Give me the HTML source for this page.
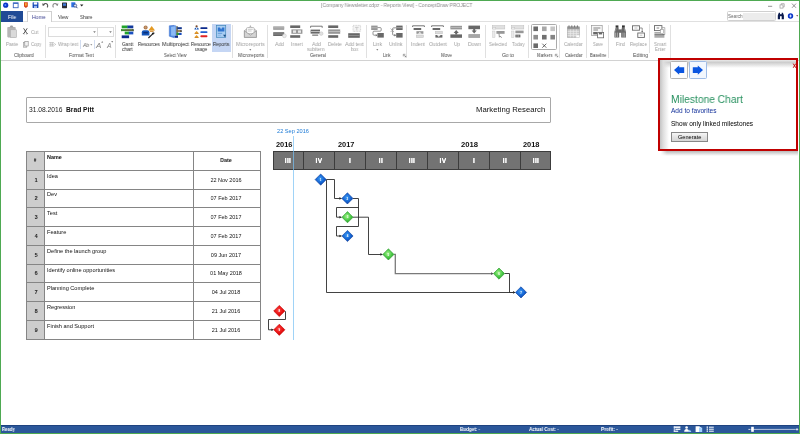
<!DOCTYPE html><html><head><meta charset="utf-8"><title>ConceptDraw PROJECT</title><style>html,body{margin:0;padding:0;}body{width:800px;height:434px;overflow:hidden;background:#fff;position:relative;font-family:"Liberation Sans", sans-serif;}div,span,svg{position:absolute;}span{white-space:nowrap;transform-origin:0 50%;will-change:transform;}svg{overflow:visible;}</style></head><body>
<span id="t0" style="left:321.00px;top:2px;font-size:5.2px;line-height:6px;color:#8a8a8a;transform:scaleX(0.9457);">[Company Newsletter.cdpz - Reports View] - ConceptDraw PROJECT</span>
<svg style="left:0.00px;top:0.00px" width="100" height="11" viewBox="0 0 100 11"><circle cx="5.7" cy="5.2" r="2.6" fill="#0a35c8"/><circle cx="5.4" cy="4.9" r="1" fill="#5b8cff"/><rect x="13.3" y="2.9" width="4.8" height="4.8" fill="#fff" stroke="#3a66c0" stroke-width="0.9"/><rect x="13.3" y="2.7" width="4.8" height="1.2" fill="#3a66c0"/><path d="M24 2.3h3.8v4.2l-1.9 1.5l-1.9 -1.5z" fill="#d8461a"/><rect x="25" y="3.1" width="1.8" height="2.6" fill="#f5a733"/><rect x="32.6" y="2.3" width="5.8" height="5.8" rx="0.5" fill="#1548b8"/><rect x="33.8" y="2.3" width="3.4" height="2.3" fill="#fff"/><rect x="34" y="5.8" width="3" height="2.3" fill="#9db8ee"/><path d="M43.2 5.2a2.3 2.3 0 1 1 3.9 2.2" fill="none" stroke="#555" stroke-width="1.1"/><path d="M42.2 3.3l0.6 2.8l2.4 -1.4z" fill="#555"/><path d="M57.4 5.2a2.3 2.3 0 1 0 -3.9 2.2" fill="none" stroke="#8a8a8a" stroke-width="1.1"/><path d="M58.4 3.3l-0.6 2.8l-2.4 -1.4z" fill="#8a8a8a"/><rect x="62" y="2.4" width="5" height="5.8" rx="0.6" fill="#2c2c34"/><rect x="63" y="3.4" width="3" height="2.4" fill="#3f79d8"/><rect x="71.3" y="2.3" width="4" height="5" fill="#2d6fe0"/><circle cx="75.2" cy="5.6" r="1.5" fill="#dfe9fb" stroke="#223a7a" stroke-width="0.7"/><path d="M76.2 6.8l1.2 1.4" stroke="#223a7a" stroke-width="0.9"/><path d="M80 4.4h3.4l-1.7 2z" fill="#222"/></svg>
<svg style="left:0.00px;top:0.00px" width="800" height="11" viewBox="0 0 800 11"><path d="M768 6.3h4.2" stroke="#777" stroke-width="0.8"/><rect x="780" y="4.9" width="3" height="3.2" fill="none" stroke="#9a9a9a" stroke-width="0.7"/><path d="M781.2 4.9v-1.2h3v3.2h-1.2" fill="none" stroke="#9a9a9a" stroke-width="0.7"/><path d="M792 3.6l4 4.2M796 3.6l-4 4.2" stroke="#777" stroke-width="0.8"/></svg>
<div style="left:1.00px;top:21.20px;width:798.00px;height:0.80px;background:#e0e0e0;"></div>
<div style="left:1.00px;top:11.20px;width:22.00px;height:10.80px;background:#1f4a96;"></div>
<span id="t1" style="left:8.00px;top:13px;font-size:6.2px;line-height:7px;color:#fff;transform:scaleX(0.8213);">File</span>
<div style="left:26.50px;top:11.20px;width:25.50px;height:11.00px;background:#fff;box-sizing:border-box;border:0.8px solid #cfcfcf;border-bottom:none;"></div>
<span id="t2" style="left:32.20px;top:14px;font-size:5.8px;line-height:6px;color:#3a3f8f;transform:scaleX(0.8792);">Home</span>
<span id="t3" style="left:58.00px;top:14px;font-size:5.8px;line-height:6px;color:#3a3a3a;transform:scaleX(0.8180);">View</span>
<span id="t4" style="left:80.00px;top:14px;font-size:5.8px;line-height:6px;color:#3a3a3a;transform:scaleX(0.7952);">Share</span>
<div style="left:726.60px;top:11.20px;width:49.40px;height:9.60px;background:#fff;box-sizing:border-box;border:0.8px solid #d0d0d0;border-radius:1.5px;"></div>
<div style="left:743.20px;top:12.60px;width:31.80px;height:7.00px;background:#ececec;"></div>
<span id="t5" style="left:728.00px;top:13px;font-size:5.4px;line-height:6px;color:#666;transform:scaleX(0.8541);">Search</span>
<svg style="left:0.00px;top:0.00px" width="800" height="22" viewBox="0 0 800 22"><path d="M777.8 19.2v-3.6l1 -2.8h1.2v6.4z M783.9 19.2v-3.6l-1 -2.8h-1.2v6.4z" fill="#0b1b4d"/><rect x="779.6" y="14.2" width="2.6" height="2" fill="#0b1b4d"/><circle cx="790.5" cy="16" r="2.7" fill="#0a35c8"/><path d="M790.5 14.2l1.2 1.8l-1.2 1.8l-1.2 -1.8z" fill="#cfe0ff"/><path d="M796.2 15.3h2l-1 1.3z" fill="#5a2a2a"/></svg>
<div style="left:1.00px;top:60.30px;width:798.00px;height:0.80px;background:#d2d2d2;"></div>
<div style="left:45.00px;top:24.70px;width:0.80px;height:33.00px;background:#e0e0e0;"></div>
<div style="left:115.30px;top:24.70px;width:0.80px;height:33.00px;background:#e0e0e0;"></div>
<div style="left:232.30px;top:24.70px;width:0.80px;height:33.00px;background:#e0e0e0;"></div>
<div style="left:267.30px;top:24.70px;width:0.80px;height:33.00px;background:#e0e0e0;"></div>
<div style="left:365.80px;top:24.70px;width:0.80px;height:33.00px;background:#e0e0e0;"></div>
<div style="left:405.80px;top:24.70px;width:0.80px;height:33.00px;background:#e0e0e0;"></div>
<div style="left:485.10px;top:24.70px;width:0.80px;height:33.00px;background:#e0e0e0;"></div>
<div style="left:527.90px;top:24.70px;width:0.80px;height:33.00px;background:#e0e0e0;"></div>
<div style="left:559.10px;top:24.70px;width:0.80px;height:33.00px;background:#e0e0e0;"></div>
<div style="left:586.00px;top:24.70px;width:0.80px;height:33.00px;background:#e0e0e0;"></div>
<div style="left:608.40px;top:24.70px;width:0.80px;height:33.00px;background:#e0e0e0;"></div>
<div style="left:669.80px;top:24.70px;width:0.80px;height:33.00px;background:#e0e0e0;"></div>
<div style="left:649.10px;top:24.00px;width:0.80px;height:28.50px;background:#e0e0e0;"></div>
<div style="left:79.60px;top:40.00px;width:0.80px;height:9.40px;background:#d2ddf0;"></div>
<div style="left:94.10px;top:40.00px;width:0.80px;height:9.40px;background:#d2ddf0;"></div>
<span id="t6" style="left:14.00px;top:52px;font-size:5.3px;line-height:6px;color:#484848;transform:scaleX(0.8683);">Clipboard</span>
<span id="t7" style="left:69.00px;top:52px;font-size:5.3px;line-height:6px;color:#484848;transform:scaleX(0.8861);">Format Text</span>
<span id="t8" style="left:164.00px;top:52px;font-size:5.3px;line-height:6px;color:#484848;transform:scaleX(0.8154);">Select View</span>
<span id="t9" style="left:237.70px;top:52px;font-size:5.3px;line-height:6px;color:#484848;transform:scaleX(0.8866);">Microreports</span>
<span id="t10" style="left:309.70px;top:52px;font-size:5.3px;line-height:6px;color:#484848;transform:scaleX(0.8484);">General</span>
<span id="t11" style="left:383.00px;top:52px;font-size:5.3px;line-height:6px;color:#484848;transform:scaleX(0.7717);">Link</span>
<span id="t12" style="left:441.00px;top:52px;font-size:5.3px;line-height:6px;color:#484848;transform:scaleX(0.8492);">Move</span>
<span id="t13" style="left:501.70px;top:52px;font-size:5.3px;line-height:6px;color:#484848;transform:scaleX(0.9253);">Go to</span>
<span id="t14" style="left:536.50px;top:52px;font-size:5.3px;line-height:6px;color:#484848;transform:scaleX(0.8098);">Markers</span>
<span id="t15" style="left:564.70px;top:52px;font-size:5.3px;line-height:6px;color:#484848;transform:scaleX(0.8140);">Calendar</span>
<span id="t16" style="left:589.70px;top:52px;font-size:5.3px;line-height:6px;color:#484848;transform:scaleX(0.8117);">Baseline</span>
<span id="t17" style="left:633.00px;top:52px;font-size:5.3px;line-height:6px;color:#484848;transform:scaleX(0.9257);">Editing</span>
<svg style="left:403.20px;top:54.20px" width="3" height="3" viewBox="0 0 3 3"><path d="M0.3 2.4v-2.1h2.1" fill="none" stroke="#666" stroke-width="0.6"/><path d="M1.2 1.2l1.6 1.6m0 -1.2v1.2h-1.2" fill="none" stroke="#666" stroke-width="0.6"/></svg>
<svg style="left:555.00px;top:54.20px" width="3" height="3" viewBox="0 0 3 3"><path d="M0.3 2.4v-2.1h2.1" fill="none" stroke="#666" stroke-width="0.6"/><path d="M1.2 1.2l1.6 1.6m0 -1.2v1.2h-1.2" fill="none" stroke="#666" stroke-width="0.6"/></svg>
<span id="t18" style="left:6.00px;top:41px;font-size:5.6px;line-height:6px;color:#9e9e9e;transform:scaleX(0.8384);">Paste</span>
<span id="t19" style="left:30.70px;top:29px;font-size:5.6px;line-height:6px;color:#9e9e9e;transform:scaleX(0.8373);">Cut</span>
<span id="t20" style="left:30.70px;top:41px;font-size:5.6px;line-height:6px;color:#9e9e9e;transform:scaleX(0.7885);">Copy</span>
<svg style="left:6.70px;top:24.70px" width="10" height="13" viewBox="0 0 10 13"><rect x="0.3" y="2" width="8.4" height="10.4" rx="0.8" fill="#b6b6b6"/><path d="M2.4 2.6l1.2 -2.2h1.8l1.2 2.2z" fill="#a0a0a0"/><rect x="3.4" y="4.8" width="6.2" height="7.9" fill="#dadada" stroke="#a8a8a8" stroke-width="0.5"/></svg>
<svg style="left:23.00px;top:28.00px" width="6" height="7" viewBox="0 0 6 7"><path d="M0.6 0.3l3.6 5.6M4.2 0.3l-3.6 5.6" stroke="#454545" stroke-width="0.9" fill="none"/><path d="M0.3 5.4l0.7 0.9M4.5 5.4l-0.7 0.9" stroke="#454545" stroke-width="0.8"/></svg>
<svg style="left:23.00px;top:40.60px" width="6" height="7" viewBox="0 0 6 7"><rect x="0.4" y="1.6" width="3.4" height="4.6" fill="#e6e6e6" stroke="#9a9a9a" stroke-width="0.6"/><rect x="1.8" y="0.4" width="3.4" height="4.6" fill="#f2f2f2" stroke="#8a8a8a" stroke-width="0.6"/></svg>
<div style="left:48.20px;top:27.20px;width:49.80px;height:9.60px;background:#fff;box-sizing:border-box;border:1px solid #dcdcdc;"></div>
<div style="left:97.00px;top:27.20px;width:17.00px;height:9.60px;background:#fff;box-sizing:border-box;border:1px solid #dcdcdc;"></div>
<svg style="left:93.00px;top:31.00px" width="3" height="2" viewBox="0 0 3 2"><path d="M0.2 0.2h2.6l-1.3 1.7z" fill="#7c7c7c"/></svg>
<svg style="left:109.40px;top:31.00px" width="3" height="2" viewBox="0 0 3 2"><path d="M0.2 0.2h2.6l-1.3 1.7z" fill="#7c7c7c"/></svg>
<svg style="left:49.40px;top:41.80px" width="7" height="5" viewBox="0 0 7 5"><path d="M0.2 0.6h4.8M0.2 2.3h4.8M0.2 4h4.8M1.8 0.4v3.8M3.6 0.4v3.8" stroke="#b0b0b0" stroke-width="0.6"/><path d="M5.4 1.4l1.2 1l-1.2 1" stroke="#9a9a9a" stroke-width="0.6" fill="none"/></svg>
<span id="t21" style="left:57.70px;top:41px;font-size:5.4px;line-height:6px;color:#9e9e9e;transform:scaleX(0.8838);">Wrap text</span>
<span id="t22" style="left:83.00px;top:42px;font-size:5.8px;line-height:6px;color:#666;transform:scaleX(0.8740);font-style:italic;">Ab</span>
<svg style="left:89.60px;top:43.80px" width="3" height="2" viewBox="0 0 3 2"><path d="M0.3 0.2h2l-1 1.2z" fill="#777"/></svg>
<span id="t23" style="left:96.40px;top:41px;font-size:8px;line-height:9px;color:#808080;transform:scaleX(0.9731);font-family:'Liberation Sans',sans-serif;font-style:italic;">A</span>
<svg style="left:101.00px;top:41.40px" width="3" height="2" viewBox="0 0 3 2"><path d="M0.2 1.4l1 -1.2l1 1.2z" fill="#555"/></svg>
<span id="t24" style="left:107.20px;top:42px;font-size:7px;line-height:7px;color:#808080;transform:scaleX(0.9418);font-family:'Liberation Sans',sans-serif;font-style:italic;">A</span>
<svg style="left:110.80px;top:41.20px" width="3" height="2" viewBox="0 0 3 2"><path d="M0.2 0.2l1 1.2l1 -1.2z" fill="#555"/></svg>
<div style="left:212.00px;top:23.60px;width:19.00px;height:28.40px;background:#c5d6f4;"></div>
<span id="t25" style="left:122.00px;top:41px;font-size:5.6px;line-height:6px;color:#2c2c2c;transform:scaleX(0.8183);">Gantt</span>
<span id="t26" style="left:122.30px;top:46px;font-size:5.6px;line-height:6px;color:#2c2c2c;transform:scaleX(0.8603);">chart</span>
<span id="t27" style="left:137.70px;top:41px;font-size:5.6px;line-height:6px;color:#2c2c2c;transform:scaleX(0.8150);">Resources</span>
<span id="t28" style="left:161.70px;top:41px;font-size:5.6px;line-height:6px;color:#2c2c2c;transform:scaleX(0.9437);">Multiproject</span>
<span id="t29" style="left:191.00px;top:41px;font-size:5.6px;line-height:6px;color:#2c2c2c;transform:scaleX(0.8141);">Resource</span>
<span id="t30" style="left:194.70px;top:46px;font-size:5.6px;line-height:6px;color:#2c2c2c;transform:scaleX(0.7869);">usage</span>
<span id="t31" style="left:213.00px;top:41px;font-size:5.6px;line-height:6px;color:#2c2c2c;transform:scaleX(0.8268);">Reports</span>
<svg style="left:120.80px;top:24.70px" width="13" height="13" viewBox="0 0 13 13"><rect x="0.7" y="0.5" width="6" height="2.8" fill="#21a32b"/><rect x="6.4" y="0.5" width="5.9" height="2.8" fill="#123a9c"/><rect x="0.2" y="4.2" width="12.3" height="1.9" fill="#3c8a2e"/><rect x="4" y="4.6" width="8" height="1" fill="#7a5a4a"/><path d="M11.4 4.2h1.1v2.6z" fill="#222"/><path d="M0.2 4.2h1.1l-1.1 2.6z" fill="#2c7a22"/><rect x="3.7" y="6.6" width="4.4" height="2.8" fill="#21a32b"/><rect x="7.8" y="6.6" width="4.5" height="2.8" fill="#1a4fc0"/><rect x="0.7" y="10.4" width="7.4" height="2.8" fill="#0c2a8c"/></svg>
<svg style="left:142.00px;top:24.70px" width="13" height="13" viewBox="0 0 13 13"><circle cx="3.6" cy="2.6" r="2" fill="#a9764a"/><circle cx="3.6" cy="2.4" r="1.1" fill="#c99a70"/><path d="M-0.2 10.4v-3.2q0 -2 2 -2h3.6q2 0 2 2v3.2z" fill="#1455b8"/><rect x="1.4" y="7" width="4.4" height="1.4" fill="#0b2f78"/><path d="M6.3 5.6l3.4 -4.6l3.4 4.6z" fill="#e49a24"/><path d="M7.6 5.8h4.2l-0.5 0.9h-3.2z" fill="#c87a14"/><path d="M6.4 13l4.6 -4.4" stroke="#1a1a1a" stroke-width="1.1"/><path d="M10.4 9.2l1.8 -1.8" stroke="#1a1a1a" stroke-width="1.8"/><circle cx="12" cy="7.6" r="0.6" fill="#fff"/></svg>
<svg style="left:169.00px;top:24.70px" width="13" height="13" viewBox="0 0 13 13"><path d="M0.3 0.8l5 -0.4v12.4l-5 -1.6z" fill="#5d98ea" stroke="#2a5fc4" stroke-width="0.5"/><path d="M1.6 1.4l5.4 -0.6v10.6l-5.4 -0.4z" fill="#8dbaf5" stroke="#2f6ad0" stroke-width="0.5"/><rect x="7.4" y="1.2" width="1.3" height="11" fill="#4a4a3a"/><rect x="8.2" y="2.2" width="4.6" height="2" fill="#12368c"/><rect x="7.6" y="5.2" width="4.6" height="1.6" fill="#8a6a3a"/><rect x="11.6" y="5.2" width="1" height="1.8" fill="#111"/><rect x="7.6" y="7.8" width="2.4" height="2.2" fill="#2a9a34"/><rect x="9.8" y="7.8" width="2.8" height="2.2" fill="#1a4fc0"/><rect x="5.8" y="10.9" width="3.2" height="1.9" fill="#0c2a8c"/></svg>
<svg style="left:194.00px;top:24.70px" width="14" height="13" viewBox="0 0 14 13"><circle cx="2.6" cy="1.4" r="1.1" fill="#7a4a2a"/><path d="M0.4 4.6q0 -2.2 2.2 -2.2q2.2 0 2.2 2.2z" fill="#1455b8"/><rect x="2.1" y="2.6" width="1" height="1.6" fill="#fff"/><path d="M0.2 8.4l2.4 -2.4l2.4 2.4z" fill="#e49a24"/><rect x="0.8" y="8" width="3.6" height="0.8" fill="#c87a14"/><path d="M0.2 12.4l2.4 -2.4l2.4 2.4z" fill="#e49a24"/><rect x="0.8" y="12" width="3.6" height="0.8" fill="#c87a14"/><rect x="6.4" y="2.2" width="7" height="1.9" rx="0.6" fill="#0c2a8c"/><rect x="6.4" y="6.2" width="7" height="1.9" rx="0.6" fill="#1f5fd0"/><rect x="6.4" y="10.2" width="7" height="2.1" rx="0.8" fill="#e02424"/></svg>
<svg style="left:215.70px;top:25.20px" width="11" height="13" viewBox="0 0 11 13"><rect x="0.5" y="0.5" width="9.2" height="11.8" fill="#a9cdf2" stroke="#3f86b8" stroke-width="0.7"/><path d="M1.8 2.4h2.2l1.1 2l1.1 -2h2.2v4.2h-6.6z" fill="#2f74cf"/><rect x="1.8" y="7.8" width="4.4" height="1.2" fill="#6fa3dd"/><rect x="1.8" y="9.8" width="3.2" height="1" fill="#8db9e8"/><path d="M7 9.8h3l-1 2.4z" fill="#1b4e86"/></svg>
<span id="t32" style="left:236.00px;top:41px;font-size:5.6px;line-height:6px;color:#9e9e9e;transform:scaleX(0.9230);">Microreports</span>
<svg style="left:248.80px;top:49.20px" width="3" height="2" viewBox="0 0 3 2"><path d="M0.3 0.2h2l-1 1.2z" fill="#555"/></svg>
<svg style="left:244.00px;top:24.70px" width="13" height="13" viewBox="0 0 13 13"><path d="M0.4 5.6l6 -4l6 4v6.8h-12z" fill="#e4e4e4" stroke="#909090" stroke-width="0.6"/><rect x="2.6" y="2.6" width="7.6" height="6" rx="0.8" fill="#fbfbfb" stroke="#8e8e8e" stroke-width="0.5"/><path d="M0.4 5.8l6 4.4l6 -4.4v6.6h-12z" fill="#d4d4d4" stroke="#8a8a8a" stroke-width="0.6"/><path d="M4 4.4h4.8M4 6h3.6" stroke="#b0b0b0" stroke-width="0.6"/><path d="M6.4 0.2v1.6" stroke="#a0a0a0" stroke-width="0.6"/></svg>
<span id="t33" style="left:274.70px;top:41px;font-size:5.6px;line-height:6px;color:#9e9e9e;transform:scaleX(0.9042);">Add</span>
<span id="t34" style="left:290.80px;top:41px;font-size:5.6px;line-height:6px;color:#9e9e9e;transform:scaleX(0.8357);">Insert</span>
<span id="t35" style="left:311.80px;top:41px;font-size:5.6px;line-height:6px;color:#9e9e9e;transform:scaleX(0.8741);">Add</span>
<span id="t36" style="left:307.30px;top:46px;font-size:5.6px;line-height:6px;color:#9e9e9e;transform:scaleX(0.8880);">subitem</span>
<span id="t37" style="left:328.00px;top:41px;font-size:5.6px;line-height:6px;color:#9e9e9e;transform:scaleX(0.8471);">Delete</span>
<span id="t38" style="left:344.70px;top:41px;font-size:5.6px;line-height:6px;color:#9e9e9e;transform:scaleX(0.9157);">Add text</span>
<span id="t39" style="left:350.70px;top:46px;font-size:5.6px;line-height:6px;color:#9e9e9e;transform:scaleX(0.8083);">box</span>
<svg style="left:273.00px;top:24.70px" width="13" height="13" viewBox="0 0 13 13"><rect x="0.2" y="1.4" width="11" height="3.4" fill="#979797"/><rect x="0.2" y="2.4" width="11" height="1" fill="#bdbdbd"/><rect x="0.2" y="7.2" width="11" height="3.8" fill="#686868"/><rect x="0.2" y="8.6" width="11" height="0.8" fill="#979797"/><circle cx="11.4" cy="10.8" r="1.9" fill="#ececec" stroke="#bdbdbd" stroke-width="0.5"/></svg>
<svg style="left:290.00px;top:24.70px" width="13" height="13" viewBox="0 0 13 13"><rect x="0.2" y="0.4" width="10" height="2.6" fill="#686868"/><rect x="1.4" y="4.4" width="11" height="4.4" fill="#979797"/><rect x="3" y="5.4" width="3" height="2.4" fill="#e8e8e8"/><rect x="8" y="5.4" width="3" height="2.4" fill="#e8e8e8"/><rect x="0.2" y="10.2" width="10" height="2.6" fill="#686868"/></svg>
<svg style="left:309.70px;top:24.70px" width="13" height="13" viewBox="0 0 13 13"><path d="M0.6 2.8v-1.6h11.6v1.6" fill="none" stroke="#686868" stroke-width="0.9"/><rect x="0.6" y="4.6" width="9.4" height="4" fill="#686868"/><rect x="0.6" y="6" width="9.4" height="1" fill="#bdbdbd"/><rect x="2.2" y="9.4" width="6" height="1.6" fill="#979797"/><circle cx="11.2" cy="8.6" r="1.8" fill="#e2e2e2" stroke="#bdbdbd" stroke-width="0.5"/></svg>
<svg style="left:328.00px;top:24.70px" width="13" height="13" viewBox="0 0 13 13"><rect x="0.2" y="0.4" width="10" height="2.6" fill="#686868"/><rect x="0.2" y="4.4" width="12" height="4.4" fill="#979797"/><rect x="0.2" y="6" width="12" height="1" fill="#bdbdbd"/><rect x="0.2" y="10.2" width="10" height="2.6" fill="#686868"/></svg>
<svg style="left:347.70px;top:24.70px" width="13" height="13" viewBox="0 0 13 13"><rect x="5" y="0.4" width="7.6" height="6" fill="#f3f3f3" stroke="#bdbdbd" stroke-width="0.6" stroke-dasharray="1 0.6"/><path d="M7 2.4h3.6M8.8 2.4v3" stroke="#bdbdbd" stroke-width="0.7"/><rect x="0.2" y="8.2" width="11.6" height="4.6" fill="#686868"/><rect x="0.2" y="10" width="11.6" height="0.8" fill="#979797"/></svg>
<span id="t40" style="left:373.00px;top:41px;font-size:5.6px;line-height:6px;color:#9e9e9e;transform:scaleX(0.8767);">Link</span>
<svg style="left:375.80px;top:49.20px" width="3" height="2" viewBox="0 0 3 2"><path d="M0.3 0.2h2l-1 1.2z" fill="#555"/></svg>
<span id="t41" style="left:389.00px;top:41px;font-size:5.6px;line-height:6px;color:#9e9e9e;transform:scaleX(0.8683);">Unlink</span>
<svg style="left:371.00px;top:24.70px" width="13" height="13" viewBox="0 0 13 13"><rect x="0.2" y="0.6" width="6.4" height="4.4" fill="#979797"/><rect x="0.2" y="2.4" width="6.4" height="0.8" fill="#bdbdbd"/><rect x="6.4" y="8" width="6.4" height="4.6" fill="#686868"/><path d="M6.6 2.6h2.6q1 0 1 1v1.6q0 1 -1 1h-6.2q-1 0 -1 1v2q0 1 1 1h2.6" fill="none" stroke="#686868" stroke-width="0.7"/><path d="M4.8 9l1.4 1.2l-1.4 1.2z" fill="#686868"/></svg>
<svg style="left:389.70px;top:24.70px" width="13" height="13" viewBox="0 0 13 13"><rect x="6.2" y="0.6" width="6.4" height="4.4" fill="#686868"/><rect x="6.2" y="8" width="6.4" height="4.6" fill="#686868"/><rect x="6.2" y="2.4" width="6.4" height="0.8" fill="#bdbdbd"/><path d="M6.2 2.8h-2.6q-1 0 -1 1v5.4q0 1 1 1h2.4" fill="none" stroke="#686868" stroke-width="0.7"/><path d="M4.4 9l1.4 1.2l-1.4 1.2z" fill="#686868"/><path d="M0.6 3.6l3.4 3.4M4 3.6l-3.4 3.4" stroke="#979797" stroke-width="0.7"/></svg>
<span id="t42" style="left:411.00px;top:41px;font-size:5.6px;line-height:6px;color:#9e9e9e;transform:scaleX(0.8996);">Indent</span>
<span id="t43" style="left:428.70px;top:41px;font-size:5.6px;line-height:6px;color:#9e9e9e;transform:scaleX(0.9042);">Outdent</span>
<span id="t44" style="left:453.70px;top:41px;font-size:5.6px;line-height:6px;color:#9e9e9e;transform:scaleX(0.8384);">Up</span>
<span id="t45" style="left:468.00px;top:41px;font-size:5.6px;line-height:6px;color:#9e9e9e;transform:scaleX(0.9083);">Down</span>
<svg style="left:411.80px;top:24.70px" width="13" height="13" viewBox="0 0 13 13"><path d="M0.6 2v-1.2h11.8v1.2" fill="none" stroke="#686868" stroke-width="0.9"/><rect x="1.6" y="3" width="7.6" height="2" fill="#686868"/><rect x="4.4" y="6.2" width="7" height="2.6" fill="#979797"/><path d="M6 8.8h3.6l-1.8 -2z" fill="#eee"/><rect x="4.4" y="10" width="7" height="2.6" fill="#dcdcdc" stroke="#bdbdbd" stroke-width="0.5"/></svg>
<svg style="left:431.00px;top:24.70px" width="13" height="13" viewBox="0 0 13 13"><path d="M0.6 2v-1.2h11.8v1.2" fill="none" stroke="#686868" stroke-width="0.9"/><rect x="1.6" y="3" width="7.6" height="2" fill="#686868"/><rect x="4.4" y="6.2" width="7" height="2.6" fill="#dcdcdc" stroke="#bdbdbd" stroke-width="0.5"/><rect x="4.4" y="10" width="7" height="2.6" fill="#686868"/><path d="M6 10h3.6l-1.8 2z" fill="#eee"/></svg>
<svg style="left:450.00px;top:24.70px" width="13" height="13" viewBox="0 0 13 13"><rect x="0.4" y="0.8" width="11.6" height="3.6" fill="#979797"/><rect x="0.4" y="2.2" width="11.6" height="0.8" fill="#bdbdbd"/><path d="M6.2 5l2.6 3h-1.6v1.6h-2v-1.6h-1.6z" fill="#686868"/><rect x="0.4" y="9.4" width="11.6" height="3.4" fill="#686868"/></svg>
<svg style="left:468.00px;top:24.70px" width="13" height="13" viewBox="0 0 13 13"><rect x="0.4" y="0.6" width="11.6" height="3.6" fill="#686868"/><path d="M6.2 8.6l2.6 -3h-1.6v-1.6h-2v1.6h-1.6z" fill="#686868"/><rect x="0.4" y="9.2" width="11.6" height="3.6" fill="#979797"/><rect x="0.4" y="10.6" width="11.6" height="0.8" fill="#bdbdbd"/></svg>
<span id="t46" style="left:489.00px;top:41px;font-size:5.6px;line-height:6px;color:#9e9e9e;transform:scaleX(0.8264);">Selected</span>
<span id="t47" style="left:511.50px;top:41px;font-size:5.6px;line-height:6px;color:#9e9e9e;transform:scaleX(0.8368);">Today</span>
<svg style="left:492.00px;top:24.70px" width="13" height="13" viewBox="0 0 13 13"><rect x="0.4" y="0.6" width="12.4" height="3.4" fill="#e0e0e0" stroke="#bdbdbd" stroke-width="0.5"/><rect x="0.8" y="2.6" width="3" height="1.4" fill="#f6f6f6" stroke="#bdbdbd" stroke-width="0.4"/><rect x="0.6" y="6" width="2.4" height="6.6" fill="#eaeaea" stroke="#bdbdbd" stroke-width="0.4"/><rect x="4.4" y="6" width="8.2" height="2.8" fill="#979797"/><path d="M7 8.6l0.4 3.6l1 -1l1.2 1.6" stroke="#686868" stroke-width="0.7" fill="none"/></svg>
<svg style="left:510.70px;top:24.70px" width="13" height="13" viewBox="0 0 13 13"><rect x="0.4" y="0.6" width="12.4" height="3.4" fill="#e0e0e0" stroke="#bdbdbd" stroke-width="0.5"/><rect x="0.8" y="2.6" width="3" height="1.4" fill="#f6f6f6" stroke="#bdbdbd" stroke-width="0.4"/><rect x="0.6" y="6" width="2.4" height="6.6" fill="#eaeaea" stroke="#bdbdbd" stroke-width="0.4"/><rect x="4.4" y="5.6" width="8.2" height="2.6" fill="#979797"/><rect x="4.4" y="9.6" width="5" height="2.8" fill="#686868"/><path d="M6 9.6v2.8M7.6 9.6v2.8" stroke="#ddd" stroke-width="0.4"/></svg>
<div style="left:531.20px;top:24.00px;width:26.30px;height:26.20px;background:#fff;box-sizing:border-box;border:0.8px solid #ababab;border-radius:1.5px;"></div>
<svg style="left:0.00px;top:0.00px" width="800" height="60" viewBox="0 0 800 60"><rect x="533.4" y="26.5" width="4.6" height="4.6" fill="#6a6a6a"/><rect x="542.0" y="26.5" width="4.6" height="4.6" fill="#a8a8a8"/><rect x="550.4" y="26.5" width="4.6" height="4.6" fill="#c6c6c6"/><rect x="533.4" y="34.9" width="4.6" height="4.6" fill="#8e8e8e"/><rect x="542.0" y="34.9" width="4.6" height="4.6" fill="#707070"/><rect x="550.4" y="34.9" width="4.6" height="4.6" fill="#848484"/><rect x="533.4" y="43.4" width="4.6" height="4.6" fill="#6a6a6a"/><path d="M542.3 43.7l4 4m0 -4l-4 4" stroke="#444" stroke-width="0.8"/></svg>
<span id="t48" style="left:563.50px;top:41px;font-size:5.6px;line-height:6px;color:#9e9e9e;transform:scaleX(0.8237);">Calendar</span>
<span id="t49" style="left:592.70px;top:41px;font-size:5.6px;line-height:6px;color:#9e9e9e;transform:scaleX(0.7451);">Save</span>
<span id="t50" style="left:615.70px;top:41px;font-size:5.6px;line-height:6px;color:#9e9e9e;transform:scaleX(0.8264);">Find</span>
<span id="t51" style="left:630.00px;top:41px;font-size:5.6px;line-height:6px;color:#9e9e9e;transform:scaleX(0.8280);">Replace</span>
<span id="t52" style="left:653.70px;top:41px;font-size:5.6px;line-height:6px;color:#9e9e9e;transform:scaleX(0.8243);">Smart</span>
<span id="t53" style="left:654.70px;top:46px;font-size:5.6px;line-height:6px;color:#9e9e9e;transform:scaleX(0.7850);">Enter</span>
<svg style="left:566.80px;top:24.70px" width="13" height="13" viewBox="0 0 13 13"><rect x="0.4" y="1.8" width="12" height="10.6" fill="#c9c9c9" stroke="#979797" stroke-width="0.5"/><rect x="0.4" y="1.8" width="12" height="2.4" fill="#979797"/><path d="M2 0.4v2M4.8 0.4v2M7.6 0.4v2M10.4 0.4v2" stroke="#686868" stroke-width="0.9"/><path d="M0.6 6.4h11.6M0.6 8.4h11.6M0.6 10.4h11.6M3.4 4.4v8M6.4 4.4v8M9.4 4.4v8" stroke="#f0f0f0" stroke-width="0.6"/><rect x="9.4" y="10.4" width="3" height="2" fill="#fff"/></svg>
<svg style="left:591.00px;top:24.70px" width="13" height="13" viewBox="0 0 13 13"><rect x="0.6" y="0.6" width="10.6" height="10" fill="#f6f6f6" stroke="#979797" stroke-width="0.7"/><path d="M2.4 3h7M2.4 5h4.6" stroke="#686868" stroke-width="0.8"/><rect x="2.2" y="7" width="4" height="2.4" fill="#686868"/><rect x="6.6" y="7.4" width="6" height="5.4" fill="#fff" stroke="#686868" stroke-width="0.8"/><rect x="7.8" y="7.4" width="3.4" height="2" fill="#686868"/></svg>
<svg style="left:614.00px;top:24.70px" width="13" height="13" viewBox="0 0 13 13"><path d="M0.4 12.4v-5.4l1.4 -5h2.6l0.8 5v5.4z" fill="#686868"/><path d="M12 12.4v-5.4l-1.4 -5h-2.6l-0.8 5v5.4z" fill="#686868"/><rect x="4.6" y="4.4" width="3.2" height="3.4" fill="#686868"/><rect x="1.6" y="0.4" width="2.8" height="1.8" fill="#333"/><rect x="8" y="0.4" width="2.8" height="1.8" fill="#333"/><path d="M1.6 7.6v4.6M3.4 7.6v4.6M9 7.6v4.6M10.8 7.6v4.6" stroke="#c4c4c4" stroke-width="0.7"/><path d="M2.2 2.8l-0.8 3.6M10.2 2.8l0.8 3.6" stroke="#aaa" stroke-width="0.6"/></svg>
<svg style="left:632.00px;top:24.70px" width="13" height="13" viewBox="0 0 13 13"><rect x="0.5" y="0.8" width="7" height="4.4" fill="#fff" stroke="#686868" stroke-width="0.9"/><path d="M2.4 3h3" stroke="#979797" stroke-width="0.6"/><rect x="5.8" y="8" width="6.6" height="4.4" fill="#fff" stroke="#686868" stroke-width="0.9"/><path d="M7.8 10.2h2.6" stroke="#979797" stroke-width="0.6"/><path d="M7.6 3h2.6v3.8" fill="none" stroke="#686868" stroke-width="0.7"/><path d="M9.2 6l1 1.6l1 -1.6z" fill="#686868"/></svg>
<svg style="left:654.00px;top:24.70px" width="12" height="13" viewBox="0 0 12 13"><rect x="0.5" y="0.6" width="7.4" height="5" fill="#fff" stroke="#686868" stroke-width="0.9"/><path d="M2.6 3h2.6" stroke="#686868" stroke-width="0.8"/><path d="M8 2.6h2.8v7h-2.4" fill="none" stroke="#979797" stroke-width="0.7"/><rect x="6.4" y="4.4" width="3" height="4" fill="#fff" stroke="#979797" stroke-width="0.6"/><rect x="0.4" y="7.2" width="6" height="1.4" fill="#979797"/><rect x="0.4" y="9.2" width="10" height="1.4" fill="#686868"/><rect x="0.4" y="11.2" width="10" height="1.4" fill="#979797"/></svg>
<div style="left:26.30px;top:97.20px;width:524.60px;height:25.70px;background:#fff;box-sizing:border-box;border:1px solid #a8a8a8;border-radius:1px;"></div>
<span id="t54" style="left:28.70px;top:106px;font-size:6.7px;line-height:7px;color:#222;transform:scaleX(0.9945);">31.08.2016</span>
<span id="t55" style="left:66.20px;top:106px;font-size:6.7px;line-height:7px;color:#111;font-weight:bold;transform:scaleX(0.9901);">Brad Pitt</span>
<span id="t56" style="left:475.70px;top:105px;font-size:7.3px;line-height:9px;color:#111;transform:scaleX(1.0613);">Marketing Research</span>
<div style="left:26.30px;top:151.20px;width:18.50px;height:188.02px;background:#cdcdcd;"></div>
<div style="left:26.30px;top:150.80px;width:234.40px;height:0.80px;background:#858585;"></div>
<div style="left:26.30px;top:169.80px;width:234.40px;height:0.80px;background:#858585;"></div>
<div style="left:26.30px;top:188.58px;width:234.40px;height:0.80px;background:#858585;"></div>
<div style="left:26.30px;top:207.36px;width:234.40px;height:0.80px;background:#858585;"></div>
<div style="left:26.30px;top:226.14px;width:234.40px;height:0.80px;background:#858585;"></div>
<div style="left:26.30px;top:244.92px;width:234.40px;height:0.80px;background:#858585;"></div>
<div style="left:26.30px;top:263.70px;width:234.40px;height:0.80px;background:#858585;"></div>
<div style="left:26.30px;top:282.48px;width:234.40px;height:0.80px;background:#858585;"></div>
<div style="left:26.30px;top:301.26px;width:234.40px;height:0.80px;background:#858585;"></div>
<div style="left:26.30px;top:320.04px;width:234.40px;height:0.80px;background:#858585;"></div>
<div style="left:26.30px;top:338.82px;width:234.40px;height:0.80px;background:#858585;"></div>
<div style="left:25.90px;top:150.80px;width:0.80px;height:188.82px;background:#858585;"></div>
<div style="left:44.40px;top:150.80px;width:0.80px;height:188.82px;background:#858585;"></div>
<div style="left:193.10px;top:150.80px;width:0.80px;height:188.82px;background:#858585;"></div>
<div style="left:260.30px;top:150.80px;width:0.80px;height:188.82px;background:#858585;"></div>
<span id="t57" style="left:35.40px;top:158px;font-size:4.8px;line-height:5px;color:#111;font-weight:bold;transform:translateX(-50%);transform-origin:50% 50%;">#</span>
<span id="t58" style="left:47.00px;top:154px;font-size:5.4px;line-height:6px;color:#111;font-weight:bold;">Name</span>
<span id="t59" style="left:226.40px;top:157px;font-size:5.4px;line-height:6px;color:#111;font-weight:bold;transform:translateX(-50%) scaleX(0.9754);transform-origin:50% 50%;">Date</span>
<span id="t60" style="left:35.60px;top:177px;font-size:5.8px;line-height:6px;color:#222;font-weight:bold;transform:translateX(-50%);transform-origin:50% 50%;">1</span>
<span id="t61" style="left:47.00px;top:173px;font-size:5.6px;line-height:6px;color:#111;">Idea</span>
<span id="t62" style="left:226.00px;top:177px;font-size:5.5px;line-height:6px;color:#111;transform:translateX(-50%);transform-origin:50% 50%;">22 Nov 2016</span>
<span id="t63" style="left:35.60px;top:195px;font-size:5.8px;line-height:6px;color:#222;font-weight:bold;transform:translateX(-50%);transform-origin:50% 50%;">2</span>
<span id="t64" style="left:47.00px;top:191px;font-size:5.6px;line-height:6px;color:#111;">Dev</span>
<span id="t65" style="left:226.00px;top:195px;font-size:5.5px;line-height:6px;color:#111;transform:translateX(-50%);transform-origin:50% 50%;">07 Feb 2017</span>
<span id="t66" style="left:35.60px;top:214px;font-size:5.8px;line-height:6px;color:#222;font-weight:bold;transform:translateX(-50%);transform-origin:50% 50%;">3</span>
<span id="t67" style="left:47.00px;top:210px;font-size:5.6px;line-height:6px;color:#111;">Test</span>
<span id="t68" style="left:226.00px;top:214px;font-size:5.5px;line-height:6px;color:#111;transform:translateX(-50%);transform-origin:50% 50%;">07 Feb 2017</span>
<span id="t69" style="left:35.60px;top:233px;font-size:5.8px;line-height:6px;color:#222;font-weight:bold;transform:translateX(-50%);transform-origin:50% 50%;">4</span>
<span id="t70" style="left:47.00px;top:229px;font-size:5.6px;line-height:6px;color:#111;">Feature</span>
<span id="t71" style="left:226.00px;top:233px;font-size:5.5px;line-height:6px;color:#111;transform:translateX(-50%);transform-origin:50% 50%;">07 Feb 2017</span>
<span id="t72" style="left:35.60px;top:252px;font-size:5.8px;line-height:6px;color:#222;font-weight:bold;transform:translateX(-50%);transform-origin:50% 50%;">5</span>
<span id="t73" style="left:47.00px;top:248px;font-size:5.6px;line-height:6px;color:#111;">Define the launch group</span>
<span id="t74" style="left:226.00px;top:252px;font-size:5.5px;line-height:6px;color:#111;transform:translateX(-50%);transform-origin:50% 50%;">09 Jun 2017</span>
<span id="t75" style="left:35.60px;top:270px;font-size:5.8px;line-height:6px;color:#222;font-weight:bold;transform:translateX(-50%);transform-origin:50% 50%;">6</span>
<span id="t76" style="left:47.00px;top:267px;font-size:5.6px;line-height:6px;color:#111;">Identify online opportunities</span>
<span id="t77" style="left:226.00px;top:270px;font-size:5.5px;line-height:6px;color:#111;transform:translateX(-50%);transform-origin:50% 50%;">01 May 2018</span>
<span id="t78" style="left:35.60px;top:289px;font-size:5.8px;line-height:6px;color:#222;font-weight:bold;transform:translateX(-50%);transform-origin:50% 50%;">7</span>
<span id="t79" style="left:47.00px;top:285px;font-size:5.6px;line-height:6px;color:#111;">Planning Complete</span>
<span id="t80" style="left:226.00px;top:289px;font-size:5.5px;line-height:6px;color:#111;transform:translateX(-50%);transform-origin:50% 50%;">04 Jul 2018</span>
<span id="t81" style="left:35.60px;top:308px;font-size:5.8px;line-height:6px;color:#222;font-weight:bold;transform:translateX(-50%);transform-origin:50% 50%;">8</span>
<span id="t82" style="left:47.00px;top:304px;font-size:5.6px;line-height:6px;color:#111;">Regression</span>
<span id="t83" style="left:226.00px;top:308px;font-size:5.5px;line-height:6px;color:#111;transform:translateX(-50%);transform-origin:50% 50%;">21 Jul 2016</span>
<span id="t84" style="left:35.60px;top:327px;font-size:5.8px;line-height:6px;color:#222;font-weight:bold;transform:translateX(-50%);transform-origin:50% 50%;">9</span>
<span id="t85" style="left:47.00px;top:323px;font-size:5.6px;line-height:6px;color:#111;">Finish and Support</span>
<span id="t86" style="left:226.00px;top:327px;font-size:5.5px;line-height:6px;color:#111;transform:translateX(-50%);transform-origin:50% 50%;">21 Jul 2016</span>
<div style="left:272.80px;top:151.20px;width:278.00px;height:18.70px;background:#737373;box-sizing:border-box;border:0.8px solid #3c3c3c;"></div>
<div style="left:303.29px;top:151.20px;width:0.80px;height:18.70px;background:#3c3c3c;"></div>
<div style="left:334.18px;top:151.20px;width:0.80px;height:18.70px;background:#3c3c3c;"></div>
<div style="left:365.07px;top:151.20px;width:0.80px;height:18.70px;background:#3c3c3c;"></div>
<div style="left:395.96px;top:151.20px;width:0.80px;height:18.70px;background:#3c3c3c;"></div>
<div style="left:426.84px;top:151.20px;width:0.80px;height:18.70px;background:#3c3c3c;"></div>
<div style="left:457.73px;top:151.20px;width:0.80px;height:18.70px;background:#3c3c3c;"></div>
<div style="left:488.62px;top:151.20px;width:0.80px;height:18.70px;background:#3c3c3c;"></div>
<div style="left:519.51px;top:151.20px;width:0.80px;height:18.70px;background:#3c3c3c;"></div>
<span id="t87" style="left:288.39px;top:157px;font-size:6.6px;line-height:7px;color:#fff;font-weight:bold;transform:translateX(-50%);transform-origin:50% 50%;letter-spacing:0.3px;text-shadow:0 0 0.5px #fff;">III</span>
<span id="t88" style="left:319.28px;top:157px;font-size:6.6px;line-height:7px;color:#fff;font-weight:bold;transform:translateX(-50%);transform-origin:50% 50%;letter-spacing:0.3px;text-shadow:0 0 0.5px #fff;">IV</span>
<span id="t89" style="left:350.17px;top:157px;font-size:6.6px;line-height:7px;color:#fff;font-weight:bold;transform:translateX(-50%);transform-origin:50% 50%;letter-spacing:0.3px;text-shadow:0 0 0.5px #fff;">I</span>
<span id="t90" style="left:381.06px;top:157px;font-size:6.6px;line-height:7px;color:#fff;font-weight:bold;transform:translateX(-50%);transform-origin:50% 50%;letter-spacing:0.3px;text-shadow:0 0 0.5px #fff;">II</span>
<span id="t91" style="left:411.95px;top:157px;font-size:6.6px;line-height:7px;color:#fff;font-weight:bold;transform:translateX(-50%);transform-origin:50% 50%;letter-spacing:0.3px;text-shadow:0 0 0.5px #fff;">III</span>
<span id="t92" style="left:442.84px;top:157px;font-size:6.6px;line-height:7px;color:#fff;font-weight:bold;transform:translateX(-50%);transform-origin:50% 50%;letter-spacing:0.3px;text-shadow:0 0 0.5px #fff;">IV</span>
<span id="t93" style="left:473.73px;top:157px;font-size:6.6px;line-height:7px;color:#fff;font-weight:bold;transform:translateX(-50%);transform-origin:50% 50%;letter-spacing:0.3px;text-shadow:0 0 0.5px #fff;">I</span>
<span id="t94" style="left:504.62px;top:157px;font-size:6.6px;line-height:7px;color:#fff;font-weight:bold;transform:translateX(-50%);transform-origin:50% 50%;letter-spacing:0.3px;text-shadow:0 0 0.5px #fff;">II</span>
<span id="t95" style="left:535.51px;top:157px;font-size:6.6px;line-height:7px;color:#fff;font-weight:bold;transform:translateX(-50%);transform-origin:50% 50%;letter-spacing:0.3px;text-shadow:0 0 0.5px #fff;">III</span>
<span id="t96" style="left:275.70px;top:140px;font-size:7.4px;line-height:9px;color:#111;font-weight:bold;transform:scaleX(1.0028);">2016</span>
<span id="t97" style="left:337.70px;top:140px;font-size:7.4px;line-height:9px;color:#111;font-weight:bold;transform:scaleX(1.0028);">2017</span>
<span id="t98" style="left:460.70px;top:140px;font-size:7.4px;line-height:9px;color:#111;font-weight:bold;transform:scaleX(1.0393);">2018</span>
<span id="t99" style="left:522.80px;top:140px;font-size:7.4px;line-height:9px;color:#111;font-weight:bold;transform:scaleX(1.0028);">2018</span>
<span id="t100" style="left:276.80px;top:128px;font-size:5.6px;line-height:6px;color:#1c7ad6;transform:scaleX(1.0052);">22 Sep 2016</span>
<div style="left:293.00px;top:135.70px;width:1.00px;height:204.00px;background:rgba(120,192,244,0.7);"></div>
<svg style="left:0.00px;top:0.00px" width="800" height="434" viewBox="0 0 800 434"><defs><radialGradient id="gb" cx="0.45" cy="0.42" r="0.6"><stop offset="0" stop-color="#3f9cf4"/><stop offset="0.55" stop-color="#1668d6"/><stop offset="1" stop-color="#0a3fa6"/></radialGradient><radialGradient id="gg" cx="0.45" cy="0.42" r="0.6"><stop offset="0" stop-color="#a4f48a"/><stop offset="0.55" stop-color="#4fcb4a"/><stop offset="1" stop-color="#1d9c22"/></radialGradient><radialGradient id="gr" cx="0.45" cy="0.42" r="0.6"><stop offset="0" stop-color="#ff4a4a"/><stop offset="0.55" stop-color="#ea1414"/><stop offset="1" stop-color="#c80000"/></radialGradient></defs><polyline points="326.2,179.5 334.5,179.5 334.5,198.5 341.4,198.5" fill="none" stroke="#2e2e2e" stroke-width="0.9"/><path d="M341.8 198.4l-2.4 -1.3v2.6z" fill="#2e2e2e"/><polyline points="326.5,180.0 326.5,292.5 514.8,292.5" fill="none" stroke="#2e2e2e" stroke-width="0.9"/><path d="M515.4 292.4l-2.4 -1.3v2.6z" fill="#2e2e2e"/><polyline points="353.0,198.5 358.5,198.5 358.5,226.5 336.5,226.5 336.5,236.0 341.4,236.0" fill="none" stroke="#2e2e2e" stroke-width="0.9"/><path d="M341.8 236.0l-2.4 -1.3v2.6z" fill="#2e2e2e"/><polyline points="358.5,207.5 336.5,207.5 336.5,217.2 341.4,217.2" fill="none" stroke="#2e2e2e" stroke-width="0.9"/><path d="M341.8 217.2l-2.4 -1.3v2.6z" fill="#2e2e2e"/><polyline points="353.0,217.2 368.5,217.2 368.5,254.5 382.2,254.5" fill="none" stroke="#2e2e2e" stroke-width="0.9"/><path d="M382.8 254.4l-2.4 -1.3v2.6z" fill="#2e2e2e"/><polyline points="394.0,254.4 395.3,254.4 395.3,273.6 492.8,273.6" fill="none" stroke="#7a7a7a" stroke-width="1.3"/><path d="M493.4 273.6l-2.4 -1.3v2.6z" fill="#555"/><polyline points="504.6,273.5 509.5,273.5 509.5,292.5 514.8,292.5" fill="none" stroke="#2e2e2e" stroke-width="0.9"/><polyline points="284.9,311.5 285.5,311.5 285.5,319.5 268.5,319.5 268.5,329.8 273.2,329.8" fill="none" stroke="#2e2e2e" stroke-width="0.9"/><path d="M273.7 329.8l-2.4 -1.3v2.6z" fill="#2e2e2e"/><path d="M315.1 179.6L320.7 174.0L326.3 179.6L320.7 185.2z" fill="url(#gb)" stroke="#0b3f9c" stroke-width="0.6"/><text x="320.7" y="180.7" font-size="3" font-weight="bold" fill="#fff" text-anchor="middle" font-family="Liberation Sans, sans-serif">1</text><path d="M341.8 198.4L347.4 192.8L353.0 198.4L347.4 204.0z" fill="url(#gb)" stroke="#0b3f9c" stroke-width="0.6"/><text x="347.4" y="199.5" font-size="3" font-weight="bold" fill="#fff" text-anchor="middle" font-family="Liberation Sans, sans-serif">2</text><path d="M341.9 217.2L347.5 211.6L353.1 217.2L347.5 222.8z" fill="url(#gg)" stroke="#2f9a2f" stroke-width="0.6"/><text x="347.5" y="218.3" font-size="3" font-weight="bold" fill="#fff" text-anchor="middle" font-family="Liberation Sans, sans-serif">3</text><path d="M341.9 236.0L347.5 230.4L353.1 236.0L347.5 241.6z" fill="url(#gb)" stroke="#0b3f9c" stroke-width="0.6"/><text x="347.5" y="237.1" font-size="3" font-weight="bold" fill="#fff" text-anchor="middle" font-family="Liberation Sans, sans-serif">4</text><path d="M382.8 254.4L388.4 248.8L394.0 254.4L388.4 260.0z" fill="url(#gg)" stroke="#2f9a2f" stroke-width="0.6"/><text x="388.4" y="255.5" font-size="3" font-weight="bold" fill="#fff" text-anchor="middle" font-family="Liberation Sans, sans-serif">5</text><path d="M493.4 273.6L499.0 268.0L504.6 273.6L499.0 279.2z" fill="url(#gg)" stroke="#2f9a2f" stroke-width="0.6"/><text x="499.0" y="274.7" font-size="3" font-weight="bold" fill="#fff" text-anchor="middle" font-family="Liberation Sans, sans-serif">6</text><path d="M515.4 292.4L521.0 286.8L526.6 292.4L521.0 298.0z" fill="url(#gb)" stroke="#0b3f9c" stroke-width="0.6"/><text x="521.0" y="293.5" font-size="3" font-weight="bold" fill="#fff" text-anchor="middle" font-family="Liberation Sans, sans-serif">7</text><path d="M273.7 311.0L279.3 305.4L284.9 311.0L279.3 316.6z" fill="url(#gr)" stroke="#c40000" stroke-width="0.6"/><text x="279.3" y="312.1" font-size="3" font-weight="bold" fill="#fff" text-anchor="middle" font-family="Liberation Sans, sans-serif">8</text><path d="M273.7 329.8L279.3 324.2L284.9 329.8L279.3 335.4z" fill="url(#gr)" stroke="#c40000" stroke-width="0.6"/><text x="279.3" y="330.9" font-size="3" font-weight="bold" fill="#fff" text-anchor="middle" font-family="Liberation Sans, sans-serif">9</text></svg>
<div style="left:658.20px;top:58.20px;width:139.80px;height:92.60px;background:#fff;"></div>
<div style="left:660.20px;top:60.20px;width:135.80px;height:8.00px;background:linear-gradient(180deg,#e9e9e9 0%,#cdcdcd 30%,#e2e2e2 60%,#fff 100%);"></div>
<div style="left:660.20px;top:60.20px;width:8.80px;height:88.60px;background:linear-gradient(90deg,#c4c4c4 0%,#dedede 35%,rgba(255,255,255,0) 100%);"></div>
<div style="left:661.00px;top:150.80px;width:137.00px;height:5.70px;background:linear-gradient(180deg,#b9b9b9 0%,#d9d9d9 45%,#fff 100%);"></div>
<div style="left:660.00px;top:150.80px;width:7.00px;height:6.20px;background:linear-gradient(90deg,#fff 10%,rgba(255,255,255,0) 100%);"></div>
<div style="left:658.20px;top:58.20px;width:139.80px;height:92.60px;background:transparent;box-sizing:border-box;border:2px solid #c00000;"></div>
<div style="left:670.00px;top:61.00px;width:18.00px;height:18.00px;background:#fdfdfd;box-sizing:border-box;border:0.8px solid #b4b4b4;border-radius:1.5px;"></div>
<div style="left:689.00px;top:61.00px;width:18.00px;height:18.00px;background:#f2f7fe;box-sizing:border-box;border:0.8px solid #9fbce6;border-radius:1.5px;"></div>
<svg style="left:0.00px;top:0.00px" width="800" height="160" viewBox="0 0 800 160"><path d="M674 70.1l5.2 -4.7v1.9h5v5.6h-5v1.9z" fill="#0a55e0"/><path d="M703 70.1l-5.2 -4.7v1.9h-5v5.6h5v1.9z" fill="#0a55e0"/><path d="M793.2 63.6l2.6 4.2M795.8 63.6l-2.6 4.2" stroke="#c00000" stroke-width="0.9"/></svg>
<span id="t101" style="left:671.20px;top:94px;font-size:10.4px;line-height:11px;color:#26905e;transform:scaleX(0.9867);">Milestone Chart</span>
<span id="t102" style="left:671.00px;top:107px;font-size:6.5px;line-height:7px;color:#12309a;transform:scaleX(1.0051);">Add to favorites</span>
<span id="t103" style="left:671.00px;top:120px;font-size:6.5px;line-height:7px;color:#000;transform:scaleX(1.0054);">Show only linked milestones</span>
<div style="left:671.10px;top:132.20px;width:36.80px;height:9.60px;background:linear-gradient(180deg,#f6f6f6,#e2e2e2 55%,#d6d6d6);box-sizing:border-box;border:0.8px solid #888;"></div>
<span id="t104" style="left:678.00px;top:134px;font-size:5.6px;line-height:6px;color:#000;transform:scaleX(0.9859);">Generate</span>
<div style="left:1.00px;top:424.90px;width:798.00px;height:8.30px;background:#2b579a;"></div>
<div style="left:1.00px;top:424.90px;width:798.00px;height:0.80px;background:#1f4380;"></div>
<span id="t105" style="left:1.60px;top:426px;font-size:5.2px;line-height:6px;color:#fff;font-weight:bold;transform:scaleX(0.8217);">Ready</span>
<span id="t106" style="left:460.40px;top:426px;font-size:5.2px;line-height:6px;color:#fff;font-weight:bold;transform:scaleX(0.8785);">Budget: -</span>
<span id="t107" style="left:528.80px;top:426px;font-size:5.2px;line-height:6px;color:#fff;font-weight:bold;transform:scaleX(0.8838);">Actual Cost: -</span>
<span id="t108" style="left:601.20px;top:426px;font-size:5.2px;line-height:6px;color:#fff;font-weight:bold;transform:scaleX(0.9104);">Profit: -</span>
<svg style="left:0.00px;top:0.00px" width="800" height="434" viewBox="0 0 800 434"><rect x="673.8" y="426.4" width="6.6" height="1.5" fill="#fff"/><rect x="675.4" y="428.6" width="5" height="1.3" fill="#fff"/><rect x="673.8" y="430.6" width="4.4" height="1.3" fill="#e8eefb"/><rect x="673.8" y="426.4" width="0.9" height="5.5" fill="#dfe8f8"/><circle cx="686.6" cy="427.5" r="1.3" fill="#fff"/><path d="M684.2 431.8q0 -2.8 2.4 -2.8q2.4 0 2.4 2.8z" fill="#fff"/><path d="M688.2 431.9l1.6 -2.4l1.6 2.4z" fill="#9fd0ff"/><path d="M695.6 426.3h3.6l1.6 1.4v4.3h-5.2z" fill="#fff"/><path d="M699 427.6h3.2v4.4h-3.2z" fill="#9fd0ff"/><path d="M699.6 426.8l2 1.6" stroke="#cfe4ff" stroke-width="0.7"/><path d="M706.6 427.2h1.4M706.6 429.2h1.4M706.6 431.2h1.4" stroke="#fff" stroke-width="1.2"/><path d="M709 427.2h4.8M709 429.2h4.8M709 431.2h4.8" stroke="#fff" stroke-width="1"/><path d="M748.4 429.4h1.8" stroke="#fff" stroke-width="0.8"/><path d="M750.6 429.4h45" stroke="#f0f4fc" stroke-width="0.7"/><rect x="751.2" y="426.8" width="2.6" height="5" fill="#fff"/><path d="M795.8 429.4h2.4M797 428.2v2.4" stroke="#fff" stroke-width="0.8"/></svg>
<div style="left:0.00px;top:0.00px;width:800.00px;height:1.00px;background:#4ea952;"></div>
<div style="left:0.00px;top:433.00px;width:800.00px;height:1.00px;background:#4ea952;"></div>
<div style="left:0.00px;top:0.00px;width:1.00px;height:434.00px;background:#4ea952;"></div>
<div style="left:799.00px;top:0.00px;width:1.00px;height:434.00px;background:#4ea952;"></div>
</body></html>
